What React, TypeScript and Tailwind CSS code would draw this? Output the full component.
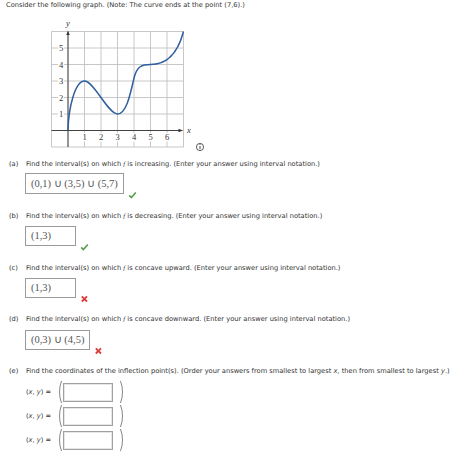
import React from 'react';

const S = 16.5;
const OX = 68;
const OY = 130.5;
const px = (x: number) => OX + S * x;
const py = (y: number) => OY - S * y;

function Graph() {
    const vx = [-1, 0, 1, 2, 3, 4, 5, 6, 7];
    const hy = [-1, 0, 1, 2, 3, 4, 5, 6];
    return (
        <svg className="ml-[40px] block" width={170} height={140} viewBox="40 14 170 140">
            {/* grid */}
            {vx.map((k) => (
                <line key={'v' + k} x1={px(k)} y1={py(6)} x2={px(k)} y2={py(-1)} stroke="#c2c2c2" strokeWidth={0.9} />
            ))}
            {hy.map((k) => (
                <line key={'h' + k} x1={px(-1)} y1={py(k)} x2={px(7)} y2={py(k)} stroke="#c2c2c2" strokeWidth={0.9} />
            ))}
            {/* axes */}
            <line x1={OX} y1={py(-1)} x2={OX} y2={33} stroke="#333" strokeWidth={0.9} />
            <path d="M68,30.5 L66.3,35 L69.7,35 Z" fill="#333" />
            <line x1={px(-1)} y1={OY} x2={180} y2={OY} stroke="#333" strokeWidth={0.9} />
            <path d="M183,130.5 L178.5,128.8 L178.5,132.2 Z" fill="#333" />
            {/* y labels */}
            {[1, 2, 3, 4, 5].map((k) => (
                <g key={'yl' + k}>
                    <rect x={58} y={py(k) - 4} width={6} height={8} fill="#fff" />
                    <text x={61} y={py(k) + 3} textAnchor="middle" fontSize={8.5} fill="#333" fontFamily="'Liberation Serif', serif">
                        {k}
                    </text>
                </g>
            ))}
            {/* x labels */}
            {[1, 2, 3, 4, 5, 6].map((k) => (
                <g key={'xl' + k}>
                    <rect x={px(k) - 3} y={133} width={6} height={8.5} fill="#fff" />
                    <text x={px(k)} y={140} textAnchor="middle" fontSize={8.5} fill="#333" fontFamily="'Liberation Serif', serif">
                        {k}
                    </text>
                </g>
            ))}
            <text x={68} y={26} textAnchor="middle" fontSize={8.5} fill="#333" fontStyle="italic" fontFamily="'Liberation Serif', serif">
                y
            </text>
            <text x={189} y={133} textAnchor="middle" fontSize={8.5} fill="#333" fontStyle="italic" fontFamily="'Liberation Serif', serif">
                x
            </text>
            {/* curve */}
            <path
                d="M68,130.5 C68.5,108 75,81 84.5,81 C94,81 108,114 117.5,114 C126,114 130,96 134,78 C137,66 142,64.5 150.5,64.5 C162,64.5 176,60 183.5,31.5"
                fill="none"
                stroke="#2f5f9e"
                strokeWidth={1.5}
            />
            {/* info icon */}
            <circle cx={200} cy={147} r={3.6} fill="none" stroke="#333" strokeWidth={0.8} />
            <line x1={200} y1={146} x2={200} y2={149.2} stroke="#333" strokeWidth={0.9} />
            <circle cx={200} cy={144.6} r={0.5} fill="#333" />
        </svg>
    );
}

const Check = () => (
    <svg width={9} height={8} viewBox="0 0 9 8" className="ml-[4px] translate-y-[5px]">
        <path d="M1.2,4.3 L3.4,6.5 L7.8,1.5" fill="none" stroke="#5a9e4e" strokeWidth={1.7} />
    </svg>
);

const Cross = () => (
    <svg width={9} height={8} viewBox="0 0 9 8" className="ml-[4px] translate-y-[5px]">
        <path d="M1.8,1.3 L7,6.5 M7,1.3 L1.8,6.5" fill="none" stroke="#dc3f3a" strokeWidth={1.8} />
    </svg>
);

const F = () => <i className="font-['Liberation_Serif',serif]">f</i>;

function Question({ label, children, className = '' }: any) {
    return (
        <div className={`flex h-[10px] items-center pl-[9px] leading-[10px] whitespace-nowrap ${className}`}>
            <span className="w-[17px]">{label}</span>
            <span>{children}</span>
        </div>
    );
}

function Answer({ text, width, height, mark, className = '' }: any) {
    return (
        <div className={`flex items-end pl-[25px] ${className}`}>
            <div
                className="flex items-center border border-[#9a9a9a] bg-white pl-[5px] font-['Liberation_Serif',serif] text-[10.5px] text-[#555] whitespace-nowrap"
                style={{ width, height }}
            >
                {text}
            </div>
            {mark === 'ok' ? <Check /> : <Cross />}
        </div>
    );
}

const Paren = ({ right = false }: { right?: boolean }) => (
    <svg width={6} height={24} viewBox="0 0 6 24">
        <path d={right ? 'M1.5,1 Q5.5,12 1.5,23' : 'M4.5,1 Q0.5,12 4.5,23'} fill="none" stroke="#777" strokeWidth={0.9} />
    </svg>
);

function PointRow() {
    return (
        <div className="flex h-[22px] items-center pl-[26px]">
            <span className="w-[31px] whitespace-nowrap">
                (<i>x</i>, <i>y</i>) <b>=</b>
            </span>
            <Paren />
            <div className="h-[19px] w-[50px] border border-[#a0a0a0] bg-white shadow-[inset_0_0_0_1px_#e6e6e6]" />
            <span className="ml-[6px]">
                <Paren right />
            </span>
        </div>
    );
}

export default function App() {
    return (
        <div className="h-[454px] w-[474px] overflow-hidden bg-white font-['DejaVu_Sans',sans-serif] text-[6.7px] text-[#333]">
            <div className="h-[14px] pl-[6px] leading-[10px] whitespace-nowrap">
                Consider the following graph. (Note: The curve ends at the point (7,6).)
            </div>
            <Graph />

            <Question label="(a)" className="mt-[5px]">
                Find the interval(s) on which <F /> is increasing. (Enter your answer using interval notation.)
            </Question>
            <Answer className="mt-[4px]" text="(0,1) ∪ (3,5) ∪ (5,7)" width={99} height={21} mark="ok" />

            <Question label="(b)" className="mt-[17px]">
                Find the interval(s) on which <F /> is decreasing. (Enter your answer using interval notation.)
            </Question>
            <Answer className="mt-[5px]" text="(1,3)" width={51} height={20} mark="ok" />

            <Question label="(c)" className="mt-[17px]">
                Find the interval(s) on which <F /> is concave upward. (Enter your answer using interval notation.)
            </Question>
            <Answer className="mt-[5px]" text="(1,3)" width={51} height={20} mark="bad" />

            <Question label="(d)" className="mt-[16px]">
                Find the interval(s) on which <F /> is concave downward. (Enter your answer using interval notation.)
            </Question>
            <Answer className="mt-[6px]" text="(0,3) ∪ (4,5)" width={65} height={20} mark="bad" />

            <Question label="(e)" className="mt-[16px]">
                Find the coordinates of the inflection point(s). (Order your answers from smallest to largest <i>x</i>, then from smallest to largest <i>y</i>.)
            </Question>
            <div className="mt-[5px] flex flex-col gap-[2px]">
                <PointRow />
                <PointRow />
                <PointRow />
            </div>
        </div>
    );
}
